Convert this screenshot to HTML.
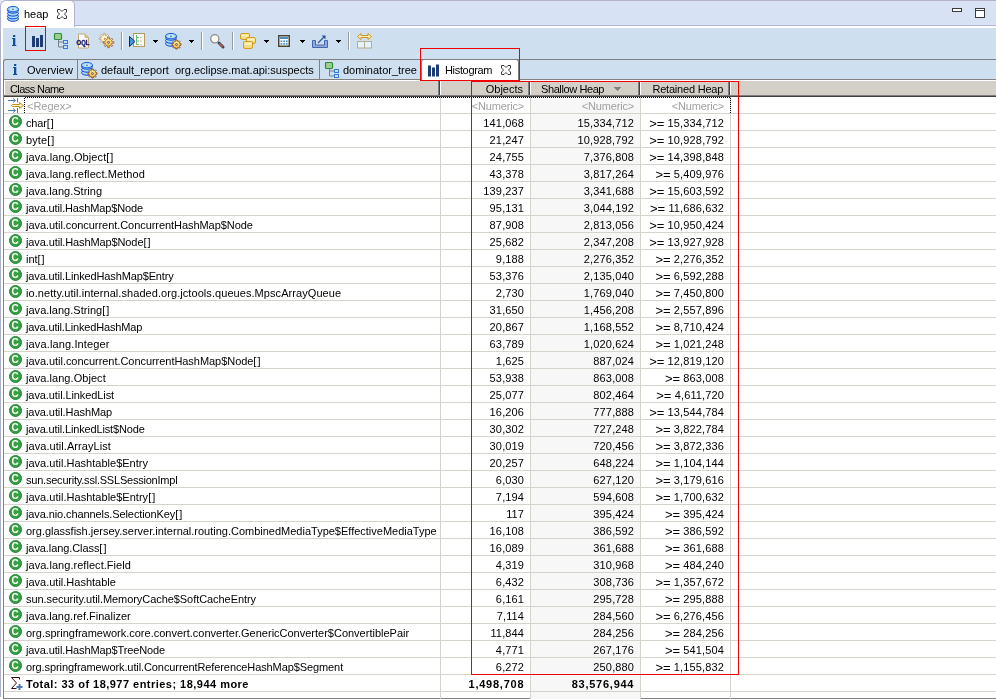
<!DOCTYPE html>
<html lang="en"><head><meta charset="utf-8"><title>heap - Histogram</title>
<style>
html,body{margin:0;padding:0}
body{width:996px;height:699px;overflow:hidden;background:#fff;position:relative;font:11px/16px "Liberation Sans","DejaVu Sans",sans-serif;color:#000}
*{box-sizing:border-box}
.abs{position:absolute}
svg{display:block;overflow:visible}
#frameL{left:0;top:5px;width:1px;height:692px;background:#adb0cb}
#frameT{left:5px;top:0;width:991px;height:1px;background:#b2b3cb}
#corner{left:0;top:0;width:6px;height:6px;background:#e9e9f7}
#tabbar{left:1px;top:1px;width:995px;height:24px;background:#d8e2f5}
#tabbarB{left:74px;top:25px;width:922px;height:1px;background:#b0b3cf}
#toptab{left:0;top:0;width:75px;height:27px;background:#fff;border:1px solid #b0b3cf;border-bottom:none;border-radius:6px 5px 0 0}
#toptab .lbl{position:absolute;left:23px;top:5px;line-height:16px}
#toolbar{left:3px;top:28px;width:993px;height:35px;background:#cedff0}
#tabrow{left:3px;top:59px;width:993px;height:21px;background:#cedff0;border-top:1px solid #808080;border-left:1px solid #808080;border-bottom:1px solid #808080;border-top-left-radius:3px}
.itab{position:absolute;top:60px;height:19px;line-height:16px;padding-top:2px;white-space:pre}
.tsep{position:absolute;top:60px;width:1px;height:19px;background:#808080}
#acttab{left:421px;top:59px;width:98px;height:22px;background:#fff;border:1px solid #808080;border-bottom:none;border-radius:3px 3px 0 0}
#leftline{left:3px;top:79px;width:1px;height:620px;background:#808080}
#botline{left:3px;top:698px;width:993px;height:1px;background:#808080}
#hdr{left:4px;top:80px;width:992px;height:17px;background:#d4d0c8;border-top:1px solid #fff;border-bottom:1px solid #404040}
#hdr:after{content:"";position:absolute;left:0;right:0;bottom:0;height:1px;background:#808080}
.hc{position:absolute;top:0;height:15px;border-left:1px solid #fff;border-right:1px solid #404040;box-shadow:inset -1px 0 0 #808080;line-height:16px;padding-top:0px;white-space:pre}
.hc span{position:absolute;top:0px}
#tbl{position:absolute;left:4px;top:97px;width:992px}
.r{position:relative;height:17px;border-bottom:1px solid #d6d3cd;white-space:pre;
 background:
 linear-gradient(#d6d3cd,#d6d3cd) 436px 0/1px 100% no-repeat,
 linear-gradient(#d6d3cd,#d6d3cd) 526px 0/1px 100% no-repeat,
 linear-gradient(#f7f7f7,#f7f7f7) 527px 0/109px 100% no-repeat,
 linear-gradient(#d6d3cd,#d6d3cd) 636px 0/1px 100% no-repeat,
 linear-gradient(#d6d3cd,#d6d3cd) 726px 0/1px 100% no-repeat;}
.r.e{height:7px;border-bottom:none}
.r span{position:absolute;top:1px;line-height:16px}
.r .n{left:22px}
.r .a{right:472px}
.r .b{right:362px}
.r .c{right:272px}
.r.f .n{left:23px}
.g{color:#a0a0a0}
.t{font-weight:bold}
.ci{position:absolute;left:5px;top:1px;width:13px;height:13px;border-radius:50%;background:#35a040;border:1px solid #24843a;color:#fff;font:bold 10px/12.500px "Liberation Sans",sans-serif;text-align:center;font-style:normal;text-indent:-1px}
.r .ficon{left:0;top:0}
.r .sig{left:6px;top:0}
.red{position:absolute;border:1px solid #f00000}
.sep{position:absolute;top:32px;width:2px;height:18px;border-left:1px solid #9a9a9a;border-right:1px solid #fff}
.ic{position:absolute}
#focusT{left:25px;top:97px;width:705px;height:1px;background:repeating-linear-gradient(90deg,#000 0 1px,transparent 1px 2px)}
.focusV{position:absolute;top:98px;width:1px;height:15px;background:repeating-linear-gradient(180deg,#000 0 1px,transparent 1px 2px)}
.ge{font-style:normal;font-size:13px;line-height:1px;letter-spacing:0;position:relative;top:.5px}
.r .a,.r .b,.r .c{letter-spacing:.15px;margin-right:-.15px}
.t .a,.t .b{letter-spacing:.75px;margin-right:-.25px}
.f .a,.f .b,.f .c{letter-spacing:-.15px}
body{will-change:transform}
.br{font-style:normal;letter-spacing:1px}

</style></head>
<body>
<div class="abs" id="corner"></div><div class="abs" id="frameT"></div><div class="abs" id="frameL"></div>
<div class="abs" id="tabbar"></div><div class="abs" id="tabbarB"></div>
<div class="abs" id="toptab"><span class="lbl">heap</span></div>
<div class="abs" id="toolbar"></div>
<div class="sep" style="left:121px"></div><div class="sep" style="left:201px"></div><div class="sep" style="left:232px"></div><div class="sep" style="left:348px"></div>

<div class="abs" id="tabrow"></div>
<div class="itab" style="left:27px">Overview</div><div class="tsep" style="left:77px"></div>
<div class="itab" style="left:101px">default_report  org.eclipse.mat.api:suspects</div><div class="tsep" style="left:319px"></div>
<div class="itab" style="left:343px">dominator_tree</div>
<div class="abs" id="acttab"></div>
<div class="itab" style="left:445px;letter-spacing:-0.33px">Histogram</div>
<div class="abs" id="leftline"></div><div class="abs" id="botline"></div>
<div class="abs" id="hdr">
<div class="hc" style="left:0;width:436px"><span style="left:5px;letter-spacing:-0.59px">Class Name</span></div>
<div class="hc" style="left:436px;width:90px"><span style="right:6px">Objects</span></div>
<div class="hc" style="left:526px;width:110px"><span style="left:10px;letter-spacing:-0.4px">Shallow Heap</span></div>
<div class="hc" style="left:636px;width:90px"><span style="right:5.800px;letter-spacing:-0.2px">Retained Heap</span></div>
<div class="hc" style="left:726px;width:270px;border-right:none"></div>
</div>
<svg class="abs" style="left:0;top:0" width="996" height="699" viewBox="0 0 996 699">
<linearGradient id="gg" x1="0" y1="0" x2="0" y2="1"><stop offset="0" stop-color="#fff694"/><stop offset="1" stop-color="#f0ac44"/></linearGradient>
<g transform="translate(7,6)"><ellipse cx="6" cy="12.7" rx="5.500" ry="2.600" fill="#a6dcf2" stroke="#1442d4" stroke-width="1"/><ellipse cx="6" cy="10.3" rx="5.500" ry="2.600" fill="#a6dcf2" stroke="#1442d4" stroke-width="1"/><ellipse cx="6" cy="7.5" rx="5.500" ry="2.600" fill="#a6dcf2" stroke="#1442d4" stroke-width="1"/><ellipse cx="6" cy="4.6" rx="5.500" ry="2.600" fill="#a6dcf2" stroke="#1442d4" stroke-width="1"/><ellipse cx="6" cy="3.100" rx="5.500" ry="2.700" fill="#a9d9f5" stroke="#1f62da" stroke-width="1"/><ellipse cx="6" cy="3.200" rx="3.200" ry="1.300" fill="#c4e8fa"/><rect x="5" y="2.800" width="1.800" height="0.9" fill="#2a4a8c"/></g>
<path transform="translate(57,9)" d="M0.5 0.5H3L5 2.500L7 0.5H9.500V3L7.500 5L9.500 7V9.500H7L5 7.500L3 9.500H0.5V7L2.500 5L0.5 3Z" fill="#fff" stroke="#3c3c3c" stroke-width="1"/>
<rect x="952.5" y="8.500" width="9" height="3" fill="#fff" stroke="#3c3c3c" stroke-width="1"/><rect x="975.5" y="8.500" width="9" height="9" fill="#fff" stroke="#3c3c3c" stroke-width="1"/><path d="M975 10.500H985" stroke="#3c3c3c" stroke-width="1"/>
<g transform="translate(12,35)" fill="#0d4f9e"><rect x="1" y="0" width="2.300" height="2" rx="0.3"/><rect x="1" y="3" width="2.300" height="8"/><rect x="0" y="3" width="1.500" height="1"/><rect x="0" y="10" width="4.300" height="1"/></g>
<g transform="translate(32,35)" fill="#1c3e74"><rect x="0" y="1" width="3" height="11"/><rect x="4" y="3" width="3" height="9"/><rect x="8" y="0" width="3" height="12"/></g>
<g transform="translate(54,33)"><path d="M4.500 7V14H9.500M4.500 9H9.500" fill="none" stroke="#7a8088" stroke-width="1"/><rect x="0.5" y="0.5" width="7" height="6" rx="1" fill="#9ed08a" stroke="#2f8c44" stroke-width="1.2"/><rect x="9.500" y="7.500" width="4" height="3" fill="#c4e2fc" stroke="#3a7ad8" stroke-width="1"/><rect x="9.500" y="12.500" width="4" height="3" fill="#c4e2fc" stroke="#3a7ad8" stroke-width="1"/></g>
<g transform="translate(77,33.5)"><path d="M1.500 0.5H8L11.500 4V14.500H1.500Z" fill="#fbfbff" stroke="#c4aa72" stroke-width="1"/><path d="M8 0.5V4H11.500Z" fill="#e8c880" stroke="#c4aa72" stroke-width="0.8"/><text x="-0.5" y="11.300" font-family="Liberation Sans, sans-serif" font-weight="bold" font-size="7" fill="#14146e" stroke="#14146e" stroke-width="0.35" textLength="13" lengthAdjust="spacingAndGlyphs">OQL</text></g>
<g transform="translate(99,33)"><path d="M4.59 0.36L6.21 0.36L6.06 2.17L7.29 2.67L8.46 1.29L9.61 2.44L8.23 3.61L8.73 4.84L10.54 4.69L10.54 6.31L8.73 6.16L8.23 7.39L9.61 8.56L8.46 9.71L7.29 8.33L6.06 8.83L6.21 10.64L4.59 10.64L4.74 8.83L3.51 8.33L2.34 9.71L1.19 8.56L2.57 7.39L2.07 6.16L0.26 6.31L0.26 4.69L2.07 4.84L2.57 3.61L1.19 2.44L2.34 1.29L3.51 2.67L4.74 2.17Z" fill="#fff6cc" stroke="#c08a64" stroke-width="0.7" stroke-linejoin="round"/><circle cx="5.4" cy="5.5" r="0.0" fill="#fff" stroke="#4a3020" stroke-width="0.8"/><path d="M8.66 4.07L10.34 4.07L10.18 5.97L11.44 6.49L12.67 5.03L13.87 6.23L12.41 7.46L12.93 8.72L14.83 8.56L14.83 10.24L12.93 10.08L12.41 11.34L13.87 12.57L12.67 13.77L11.44 12.31L10.18 12.83L10.34 14.73L8.66 14.73L8.82 12.83L7.56 12.31L6.33 13.77L5.13 12.57L6.59 11.34L6.07 10.08L4.17 10.24L4.17 8.56L6.07 8.72L6.59 7.46L5.13 6.23L6.33 5.03L7.56 6.49L8.82 5.97Z" fill="url(#gg)" stroke="#94502c" stroke-width="0.7" stroke-linejoin="round"/><circle cx="9.5" cy="9.4" r="0.9" fill="#fff" stroke="#4a3020" stroke-width="0.8"/></g>
<g transform="translate(129,33)"><rect x="4.500" y="0.5" width="11" height="13" fill="#fdfdf6" stroke="#b49a5c" stroke-width="1"/><path d="M7.500 2V11.500M7.500 4.500H10M7.500 8H10M7.500 11.500H10" fill="none" stroke="#4aa860" stroke-width="0.8"/><path d="M11.500 4.500H13.500M11.500 8H13.500M11.500 11.500H13.500" stroke="#4aa860" stroke-width="1" stroke-dasharray="1 1"/><path d="M0.5 3.500L6 8.500L0.5 13.500Z" fill="#3c9ad6" stroke="#14247e" stroke-width="1" stroke-linejoin="round"/></g>
<g transform="translate(165,33)"><ellipse cx="6" cy="10.6" rx="5.500" ry="2.600" fill="#a6dcf2" stroke="#1442d4" stroke-width="1"/><ellipse cx="6" cy="7.6" rx="5.500" ry="2.600" fill="#a6dcf2" stroke="#1442d4" stroke-width="1"/><ellipse cx="6" cy="4.6" rx="5.500" ry="2.600" fill="#a6dcf2" stroke="#1442d4" stroke-width="1"/><ellipse cx="6" cy="3.100" rx="5.500" ry="2.700" fill="#a9d9f5" stroke="#1f62da" stroke-width="1"/><ellipse cx="6" cy="3.200" rx="3.200" ry="1.300" fill="#c4e8fa"/><rect x="5" y="2.800" width="1.800" height="0.9" fill="#2a4a8c"/><path d="M10.71 6.97L12.29 6.97L12.24 8.08L13.40 8.56L14.15 7.74L15.26 8.85L14.44 9.60L14.92 10.76L16.03 10.71L16.03 12.29L14.92 12.24L14.44 13.40L15.26 14.15L14.15 15.26L13.40 14.44L12.24 14.92L12.29 16.03L10.71 16.03L10.76 14.92L9.60 14.44L8.85 15.26L7.74 14.15L8.56 13.40L8.08 12.24L6.97 12.29L6.97 10.71L8.08 10.76L8.56 9.60L7.74 8.85L8.85 7.74L9.60 8.56L10.76 8.08Z" fill="url(#gg)" stroke="#8a4820" stroke-width="0.9" stroke-linejoin="round"/><circle cx="11.5" cy="11.5" r="0.9" fill="#fff" stroke="#4a3020" stroke-width="0.8"/></g>
<g transform="translate(210,33)"><path d="M9 10L13 14" stroke="#3a3f66" stroke-width="3" stroke-linecap="round"/><path d="M9.500 10.500L12.500 13.500" stroke="#c0623a" stroke-width="1.4" stroke-linecap="round"/><circle cx="4.800" cy="5.800" r="4.100" fill="#fdfdf2" stroke="#8e8e8e" stroke-width="1.3"/></g>
<g transform="translate(240,33)"><rect x="0.5" y="0.5" width="9" height="6" rx="1.5" fill="#f8dc80" stroke="#cf9a26" stroke-width="1"/><rect x="1.5" y="1.5" width="7" height="2.0" fill="#fff2b8"/><rect x="6.5" y="4.5" width="9" height="6" rx="1.5" fill="#f8dc80" stroke="#cf9a26" stroke-width="1"/><rect x="7.5" y="5.5" width="7" height="2.0" fill="#fff2b8"/><rect x="3.5" y="8.5" width="9" height="7" rx="1.5" fill="#f8dc80" stroke="#cf9a26" stroke-width="1"/><rect x="4.5" y="9.5" width="7" height="2.5" fill="#fff2b8"/></g>
<g transform="translate(278,35)"><rect x="0.75" y="0.75" width="10.500" height="10.500" fill="#fff" stroke="#4c4434" stroke-width="1.5"/><rect x="2" y="2" width="8" height="2" fill="#4a8ec4"/><rect x="2.5" y="5.5" width="1.8" height="1.6" fill="#4a8ec4"/><rect x="5.2" y="5.5" width="1.8" height="1.6" fill="#4a8ec4"/><rect x="7.9" y="5.5" width="1.8" height="1.6" fill="#4a8ec4"/><rect x="2.5" y="8.1" width="1.8" height="1.6" fill="#4a8ec4"/><rect x="5.2" y="8.1" width="1.8" height="1.6" fill="#4a8ec4"/><rect x="7.9" y="8.1" width="1.8" height="1.6" fill="#4a8ec4"/></g>
<g transform="translate(312,35)"><path d="M0.5 5.500H3.500V10H12.500V5.500H15.500V12.500H0.5Z" fill="#90aadc" stroke="#4468b0" stroke-width="1"/><path d="M6 8L13 1" stroke="#2a58a8" stroke-width="1.2"/><path d="M9.500 0.5H13.500V4.500Z" fill="#2a58a8"/></g>
<g transform="translate(357,33)"><path d="M0.5 3.500L4 0.5V2.500H11V0.5L14.500 3.500L11 6.500V4.500H4V6.500Z" fill="#ffeeb0" stroke="#cc9222" stroke-width="1" stroke-linejoin="round"/><rect x="0.5" y="8.500" width="7" height="6.500" fill="#e4f4fe" stroke="#b8ac90" stroke-width="1"/><rect x="7.500" y="8.500" width="7" height="6.500" fill="#e4f4fe" stroke="#b8ac90" stroke-width="1"/></g>
<g transform="translate(13,64)" fill="#0d4f9e"><rect x="1" y="0" width="2.300" height="2" rx="0.3"/><rect x="1" y="3" width="2.300" height="8"/><rect x="0" y="3" width="1.500" height="1"/><rect x="0" y="10" width="4.300" height="1"/></g>
<g transform="translate(81,62)"><ellipse cx="6" cy="10.6" rx="5.500" ry="2.600" fill="#a6dcf2" stroke="#1442d4" stroke-width="1"/><ellipse cx="6" cy="7.6" rx="5.500" ry="2.600" fill="#a6dcf2" stroke="#1442d4" stroke-width="1"/><ellipse cx="6" cy="4.6" rx="5.500" ry="2.600" fill="#a6dcf2" stroke="#1442d4" stroke-width="1"/><ellipse cx="6" cy="3.100" rx="5.500" ry="2.700" fill="#a9d9f5" stroke="#1f62da" stroke-width="1"/><ellipse cx="6" cy="3.200" rx="3.200" ry="1.300" fill="#c4e8fa"/><rect x="5" y="2.800" width="1.800" height="0.9" fill="#2a4a8c"/><path d="M10.71 6.97L12.29 6.97L12.24 8.08L13.40 8.56L14.15 7.74L15.26 8.85L14.44 9.60L14.92 10.76L16.03 10.71L16.03 12.29L14.92 12.24L14.44 13.40L15.26 14.15L14.15 15.26L13.40 14.44L12.24 14.92L12.29 16.03L10.71 16.03L10.76 14.92L9.60 14.44L8.85 15.26L7.74 14.15L8.56 13.40L8.08 12.24L6.97 12.29L6.97 10.71L8.08 10.76L8.56 9.60L7.74 8.85L8.85 7.74L9.60 8.56L10.76 8.08Z" fill="url(#gg)" stroke="#8a4820" stroke-width="0.9" stroke-linejoin="round"/><circle cx="11.5" cy="11.5" r="0.9" fill="#fff" stroke="#4a3020" stroke-width="0.8"/></g>
<g transform="translate(325,62)"><path d="M4.500 7V14H9.500M4.500 9H9.500" fill="none" stroke="#7a8088" stroke-width="1"/><rect x="0.5" y="0.5" width="7" height="6" rx="1" fill="#9ed08a" stroke="#2f8c44" stroke-width="1.2"/><rect x="9.500" y="7.500" width="4" height="3" fill="#c4e2fc" stroke="#3a7ad8" stroke-width="1"/><rect x="9.500" y="12.500" width="4" height="3" fill="#c4e2fc" stroke="#3a7ad8" stroke-width="1"/></g>
<g transform="translate(428,64.5)" fill="#1c3e74"><rect x="0" y="1" width="3" height="11"/><rect x="4" y="3" width="3" height="9"/><rect x="8" y="0" width="3" height="12"/></g>
<path transform="translate(501,65)" d="M0.5 0.5H3L5 2.500L7 0.5H9.500V3L7.500 5L9.500 7V9.500H7L5 7.500L3 9.500H0.5V7L2.500 5L0.5 3Z" fill="#fff" stroke="#3c3c3c" stroke-width="1"/>
<path d="M153 40h5v1h-1v1h-1v1h-1v-1h-1v-1h-1z" fill="#000" shape-rendering="crispEdges"/>
<path d="M189 40h5v1h-1v1h-1v1h-1v-1h-1v-1h-1z" fill="#000" shape-rendering="crispEdges"/>
<path d="M264 40h5v1h-1v1h-1v1h-1v-1h-1v-1h-1z" fill="#000" shape-rendering="crispEdges"/>
<path d="M300 40h5v1h-1v1h-1v1h-1v-1h-1v-1h-1z" fill="#000" shape-rendering="crispEdges"/>
<path d="M336 40h5v1h-1v1h-1v1h-1v-1h-1v-1h-1z" fill="#000" shape-rendering="crispEdges"/>
<path d="M614 87h7v1h-1v1h-1v1h-1v1h-1v-1h-1v-1h-1v-1h-1z" fill="#808080" shape-rendering="crispEdges"/>
</svg>
<div id="tbl">
<div class="r f"><span class="ficon"><svg width="22" height="17" viewBox="0 0 22 17"><g fill="none" stroke="#4a7db4" stroke-width="1"><path d="M4 3.500H11.500M9 1.500L11.500 3.500L9 5.500M13.500 1V5.500"/><path d="M4 13.500H11.500M9 11.500L11.500 13.500L9 15.500M13.500 11V16"/></g><path d="M8.500 7.500H15.500V5.500L19.500 8.500L15.500 11.500V9.500H8.500L7.500 8.500Z" fill="#fff6cc" stroke="#c98e16" stroke-width="1" stroke-linejoin="round"/></svg></span><span class="n g">&lt;Regex&gt;</span><span class="a g">&lt;Numeric&gt;</span><span class="b g">&lt;Numeric&gt;</span><span class="c g">&lt;Numeric&gt;</span></div>
<div class="r"><i class="ci">C</i><span class="n" style="letter-spacing:-0.189px">char<i class="br">[]</i></span><span class="a">141,068</span><span class="b">15,334,712</span><span class="c"><i class="ge">&gt;=</i> 15,334,712</span></div>
<div class="r"><i class="ci">C</i><span class="n" style="letter-spacing:0.113px">byte<i class="br">[]</i></span><span class="a">21,247</span><span class="b">10,928,792</span><span class="c"><i class="ge">&gt;=</i> 10,928,792</span></div>
<div class="r"><i class="ci">C</i><span class="n" style="letter-spacing:0.088px">java.lang.Object<i class="br">[]</i></span><span class="a">24,755</span><span class="b">7,376,808</span><span class="c"><i class="ge">&gt;=</i> 14,398,848</span></div>
<div class="r"><i class="ci">C</i><span class="n" style="letter-spacing:0.092px">java.lang.reflect.Method</span><span class="a">43,378</span><span class="b">3,817,264</span><span class="c"><i class="ge">&gt;=</i> 5,409,976</span></div>
<div class="r"><i class="ci">C</i><span class="n" style="letter-spacing:0.017px">java.lang.String</span><span class="a">139,237</span><span class="b">3,341,688</span><span class="c"><i class="ge">&gt;=</i> 15,603,592</span></div>
<div class="r"><i class="ci">C</i><span class="n" style="letter-spacing:-0.130px">java.util.HashMap$Node</span><span class="a">95,131</span><span class="b">3,044,192</span><span class="c"><i class="ge">&gt;=</i> 11,686,632</span></div>
<div class="r"><i class="ci">C</i><span class="n" style="letter-spacing:-0.056px">java.util.concurrent.ConcurrentHashMap$Node</span><span class="a">87,908</span><span class="b">2,813,056</span><span class="c"><i class="ge">&gt;=</i> 10,950,424</span></div>
<div class="r"><i class="ci">C</i><span class="n" style="letter-spacing:-0.112px">java.util.HashMap$Node<i class="br">[]</i></span><span class="a">25,682</span><span class="b">2,347,208</span><span class="c"><i class="ge">&gt;=</i> 13,927,928</span></div>
<div class="r"><i class="ci">C</i><span class="n" style="letter-spacing:-0.030px">int<i class="br">[]</i></span><span class="a">9,188</span><span class="b">2,276,352</span><span class="c"><i class="ge">&gt;=</i> 2,276,352</span></div>
<div class="r"><i class="ci">C</i><span class="n" style="letter-spacing:-0.139px">java.util.LinkedHashMap$Entry</span><span class="a">53,376</span><span class="b">2,135,040</span><span class="c"><i class="ge">&gt;=</i> 6,592,288</span></div>
<div class="r"><i class="ci">C</i><span class="n" style="letter-spacing:0.065px">io.netty.util.internal.shaded.org.jctools.queues.MpscArrayQueue</span><span class="a">2,730</span><span class="b">1,769,040</span><span class="c"><i class="ge">&gt;=</i> 7,450,800</span></div>
<div class="r"><i class="ci">C</i><span class="n" style="letter-spacing:0.025px">java.lang.String<i class="br">[]</i></span><span class="a">31,650</span><span class="b">1,456,208</span><span class="c"><i class="ge">&gt;=</i> 2,557,896</span></div>
<div class="r"><i class="ci">C</i><span class="n" style="letter-spacing:-0.159px">java.util.LinkedHashMap</span><span class="a">20,867</span><span class="b">1,168,552</span><span class="c"><i class="ge">&gt;=</i> 8,710,424</span></div>
<div class="r"><i class="ci">C</i><span class="n" style="letter-spacing:0.133px">java.lang.Integer</span><span class="a">63,789</span><span class="b">1,020,624</span><span class="c"><i class="ge">&gt;=</i> 1,021,248</span></div>
<div class="r"><i class="ci">C</i><span class="n" style="letter-spacing:-0.045px">java.util.concurrent.ConcurrentHashMap$Node<i class="br">[]</i></span><span class="a">1,625</span><span class="b">887,024</span><span class="c"><i class="ge">&gt;=</i> 12,819,120</span></div>
<div class="r"><i class="ci">C</i><span class="n" style="letter-spacing:0.057px">java.lang.Object</span><span class="a">53,938</span><span class="b">863,008</span><span class="c"><i class="ge">&gt;=</i> 863,008</span></div>
<div class="r"><i class="ci">C</i><span class="n" style="letter-spacing:-0.090px">java.util.LinkedList</span><span class="a">25,077</span><span class="b">802,464</span><span class="c"><i class="ge">&gt;=</i> 4,611,720</span></div>
<div class="r"><i class="ci">C</i><span class="n" style="letter-spacing:-0.079px">java.util.HashMap</span><span class="a">16,206</span><span class="b">777,888</span><span class="c"><i class="ge">&gt;=</i> 13,544,784</span></div>
<div class="r"><i class="ci">C</i><span class="n" style="letter-spacing:-0.145px">java.util.LinkedList$Node</span><span class="a">30,302</span><span class="b">727,248</span><span class="c"><i class="ge">&gt;=</i> 3,822,784</span></div>
<div class="r"><i class="ci">C</i><span class="n" style="letter-spacing:0.060px">java.util.ArrayList</span><span class="a">30,019</span><span class="b">720,456</span><span class="c"><i class="ge">&gt;=</i> 3,872,336</span></div>
<div class="r"><i class="ci">C</i><span class="n" style="letter-spacing:0.013px">java.util.Hashtable$Entry</span><span class="a">20,257</span><span class="b">648,224</span><span class="c"><i class="ge">&gt;=</i> 1,104,144</span></div>
<div class="r"><i class="ci">C</i><span class="n" style="letter-spacing:-0.217px">sun.security.ssl.SSLSessionImpl</span><span class="a">6,030</span><span class="b">627,120</span><span class="c"><i class="ge">&gt;=</i> 3,179,616</span></div>
<div class="r"><i class="ci">C</i><span class="n" style="letter-spacing:0.018px">java.util.Hashtable$Entry<i class="br">[]</i></span><span class="a">7,194</span><span class="b">594,608</span><span class="c"><i class="ge">&gt;=</i> 1,700,632</span></div>
<div class="r"><i class="ci">C</i><span class="n" style="letter-spacing:-0.100px">java.nio.channels.SelectionKey<i class="br">[]</i></span><span class="a">117</span><span class="b">395,424</span><span class="c"><i class="ge">&gt;=</i> 395,424</span></div>
<div class="r"><i class="ci">C</i><span class="n" style="letter-spacing:-0.005px">org.glassfish.jersey.server.internal.routing.CombinedMediaType$EffectiveMediaType</span><span class="a">16,108</span><span class="b">386,592</span><span class="c"><i class="ge">&gt;=</i> 386,592</span></div>
<div class="r"><i class="ci">C</i><span class="n" style="letter-spacing:-0.083px">java.lang.Class<i class="br">[]</i></span><span class="a">16,089</span><span class="b">361,688</span><span class="c"><i class="ge">&gt;=</i> 361,688</span></div>
<div class="r"><i class="ci">C</i><span class="n" style="letter-spacing:0.041px">java.lang.reflect.Field</span><span class="a">4,319</span><span class="b">310,968</span><span class="c"><i class="ge">&gt;=</i> 484,240</span></div>
<div class="r"><i class="ci">C</i><span class="n" style="letter-spacing:0.000px">java.util.Hashtable</span><span class="a">6,432</span><span class="b">308,736</span><span class="c"><i class="ge">&gt;=</i> 1,357,672</span></div>
<div class="r"><i class="ci">C</i><span class="n" style="letter-spacing:-0.062px">sun.security.util.MemoryCache$SoftCacheEntry</span><span class="a">6,161</span><span class="b">295,728</span><span class="c"><i class="ge">&gt;=</i> 295,888</span></div>
<div class="r"><i class="ci">C</i><span class="n" style="letter-spacing:0.006px">java.lang.ref.Finalizer</span><span class="a">7,114</span><span class="b">284,560</span><span class="c"><i class="ge">&gt;=</i> 6,276,456</span></div>
<div class="r"><i class="ci">C</i><span class="n" style="letter-spacing:-0.003px">org.springframework.core.convert.converter.GenericConverter$ConvertiblePair</span><span class="a">11,844</span><span class="b">284,256</span><span class="c"><i class="ge">&gt;=</i> 284,256</span></div>
<div class="r"><i class="ci">C</i><span class="n" style="letter-spacing:-0.114px">java.util.HashMap$TreeNode</span><span class="a">4,771</span><span class="b">267,176</span><span class="c"><i class="ge">&gt;=</i> 541,504</span></div>
<div class="r"><i class="ci">C</i><span class="n" style="letter-spacing:-0.097px">org.springframework.util.ConcurrentReferenceHashMap$Segment</span><span class="a">6,272</span><span class="b">250,880</span><span class="c"><i class="ge">&gt;=</i> 1,155,832</span></div>
<div class="r t"><span class="sig"><svg width="16" height="16" viewBox="0 0 16 16"><path d="M9.500 4.500V2.500H1.500L6.500 8L1.500 13.500H6.500" fill="none" stroke="#3a0a10" stroke-width="1"/><path d="M9.500 9V15M6.500 12H12.500" stroke="#4a7ab8" stroke-width="2" fill="none"/></svg></span><span class="n" style="letter-spacing:0.473px">Total: 33 of 18,977 entries; 18,944 more</span><span class="a">1,498,708</span><span class="b">83,576,944</span><span class="c"></span></div>
<div class="r e"></div>
</div>
<div class="red" style="left:25px;top:26px;width:21px;height:25px"></div>
<div class="red" style="left:420px;top:48px;width:100px;height:33px"></div>
<div class="red" style="left:471px;top:81px;width:268px;height:594px"></div>
<div class="abs" id="focusT"></div><div class="focusV" style="left:24px"></div><div class="focusV" style="left:730px"></div>
</body></html>
